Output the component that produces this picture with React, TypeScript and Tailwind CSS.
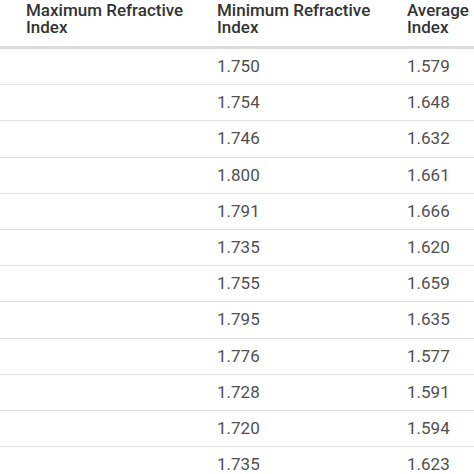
import React from "react";

const rows: [string, string][] = [
  ["1.750", "1.579"],
  ["1.754", "1.648"],
  ["1.746", "1.632"],
  ["1.800", "1.661"],
  ["1.791", "1.666"],
  ["1.735", "1.620"],
  ["1.755", "1.659"],
  ["1.795", "1.635"],
  ["1.776", "1.577"],
  ["1.728", "1.591"],
  ["1.720", "1.594"],
  ["1.735", "1.623"],
];

export default function App() {
  return (
    <div
      className="w-[474px] h-[474px] overflow-hidden bg-white"
      style={{ fontFamily: "Roboto, 'Liberation Sans', sans-serif" }}
    >
      <div className="grid grid-cols-[217px_190px_1fr] border-b-[3px] border-[#dcdcdc] pt-[2px] pb-[10px] text-[17px] leading-[17px] font-medium text-[#333] whitespace-nowrap">
        <div className="pl-[26px]">
          Maximum Refractive
          <br />
          Index
        </div>
        <div>
          Minimum Refractive
          <br />
          Index
        </div>
        <div>
          Average
          <br />
          Index
        </div>
      </div>
      {rows.map(([a, b], i) => (
        <div
          key={i}
          className="grid grid-cols-[217px_190px_1fr] h-[36.2px] border-b border-[#e2e2e2] text-[17px] leading-[24px] text-[#505050] pt-[5px]"
        >
          <div></div>
          <div>{a}</div>
          <div>{b}</div>
        </div>
      ))}
    </div>
  );
}
